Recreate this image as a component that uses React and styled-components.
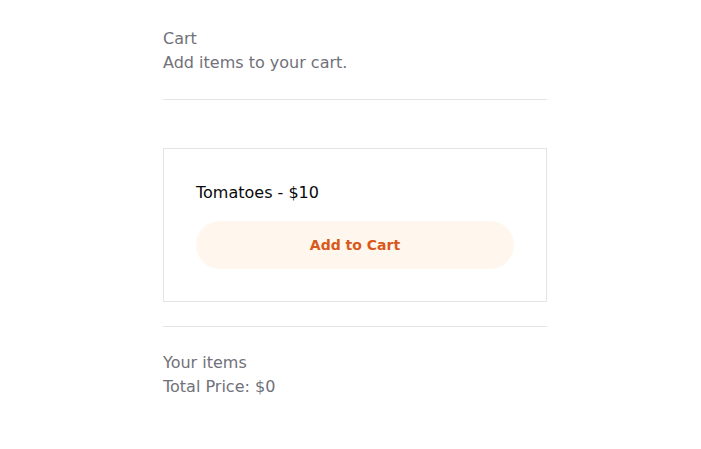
import React from 'react'
import styled, { createGlobalStyle } from 'styled-components'

const Global = createGlobalStyle`
  body {
    margin: 0;
    background: #fff;
    font-family: "DejaVu Sans", sans-serif;
  }
`

const Page = styled.div`
  width: 384px;
  padding: 27px 0 0 163px;
`

const Muted = styled.div`
  color: #71717a;
  font-size: 16px;
  line-height: 24px;
`

const Divider = styled.hr`
  border: 0;
  border-top: 1px solid #e4e4e7;
  margin: ${p => p.$top}px 0 ${p => p.$bottom}px;
`

const Card = styled.div`
  border: 1px solid #e4e4e7;
  padding: 32px;
  display: flex;
  flex-direction: column;
  gap: 16px;
`

const Title = styled.div`
  color: #09090b;
  font-size: 16px;
  line-height: 24px;
`

const Button = styled.button`
  height: 48px;
  border: 0;
  border-radius: 24px;
  background: #fff7ed;
  color: #d9581b;
  font-family: "DejaVu Sans", sans-serif;
  font-weight: bold;
  font-size: 14px;
  cursor: pointer;
`

export default function App() {
  return (
    <Page>
      <Global />
      <Muted>Cart</Muted>
      <Muted>Add items to your cart.</Muted>
      <Divider $top={24} $bottom={48} />
      <Card>
        <Title>Tomatoes - $10</Title>
        <Button>Add to Cart</Button>
      </Card>
      <Divider $top={24} $bottom={24} />
      <Muted>Your items</Muted>
      <Muted>Total Price: $0</Muted>
    </Page>
  )
}
